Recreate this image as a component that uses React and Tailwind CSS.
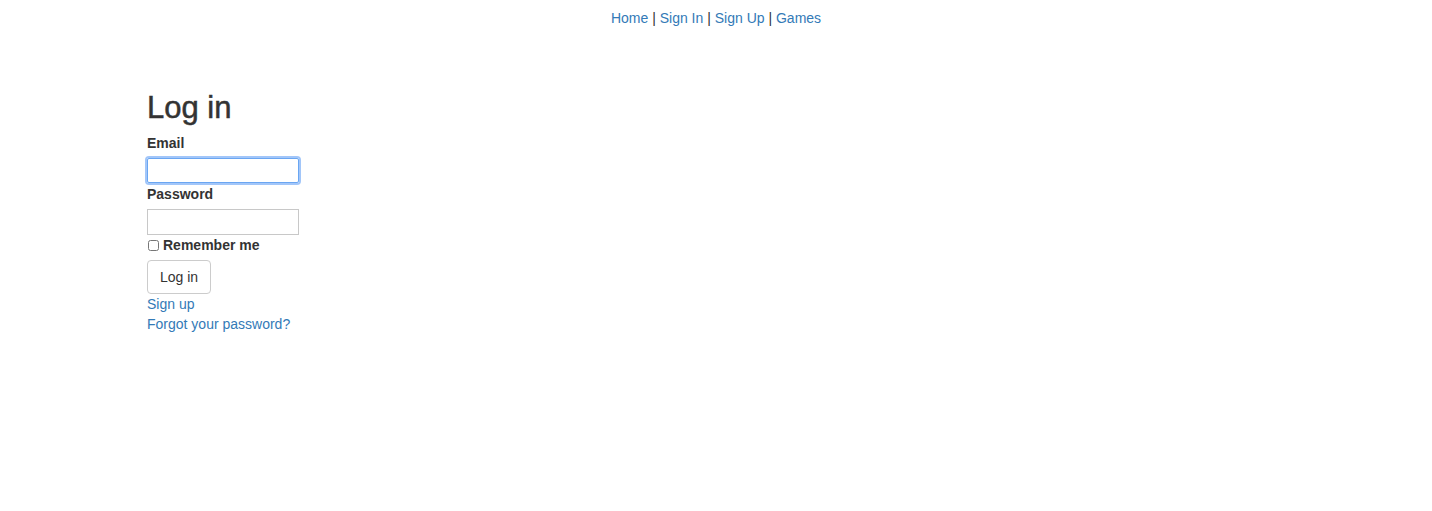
export default function App() {
  return (
    <div className="min-h-[511px] bg-white text-[14px] leading-[20px] text-[#333] font-['Liberation_Sans',Arial,sans-serif]">
      {/* top nav */}
      <div className="pt-[8px] text-center">
        <a href="#" className="text-[#337ab7]">Home</a> |{' '}
        <a href="#" className="text-[#337ab7]">Sign In</a> |{' '}
        <a href="#" className="text-[#337ab7]">Sign Up</a> |{' '}
        <a href="#" className="text-[#337ab7]">Games</a>
      </div>

      <div className="mx-auto w-[1170px] px-4">
        <h2 className="mt-[63px] mb-[9px] text-[31px] leading-[33px] font-medium [-webkit-text-stroke:0.5px_#333]">Log in</h2>

        <form onSubmit={(e) => e.preventDefault()}>
          <div>
            <label className="inline-block mb-[5px] font-bold">Email</label>
            <div>
              <input
                type="email"
                autoFocus
                className="block w-[152px] h-[25px] border border-[#6aa6f2] rounded-[2px] px-1 outline-none shadow-[0_0_0_2px_rgba(100,160,245,0.6)]"
              />
            </div>
          </div>

          <div className="mt-[1px]">
            <label className="inline-block mb-[5px] font-bold">Password</label>
            <div>
              <input
                type="password"
                className="block w-[152px] h-[26px] border border-[#c8c8c8] px-1 outline-none"
              />
            </div>
          </div>

          <div className="flex items-center h-[20px]">
            <input type="checkbox" className="w-[11px] h-[11px] ml-[1px] mr-[4px] accent-[#337ab7]" />
            <label className="font-bold">Remember me</label>
          </div>

          <div className="mt-[5px]">
            <button
              type="submit"
              className="h-[34px] px-[12px] border border-[#ccc] rounded-[4px] bg-white text-[#333]"
            >
              Log in
            </button>
          </div>
        </form>

        <a href="#" className="block text-[#337ab7]">Sign up</a>
        <a href="#" className="block text-[#337ab7]">Forgot your password?</a>
      </div>
    </div>
  );
}
